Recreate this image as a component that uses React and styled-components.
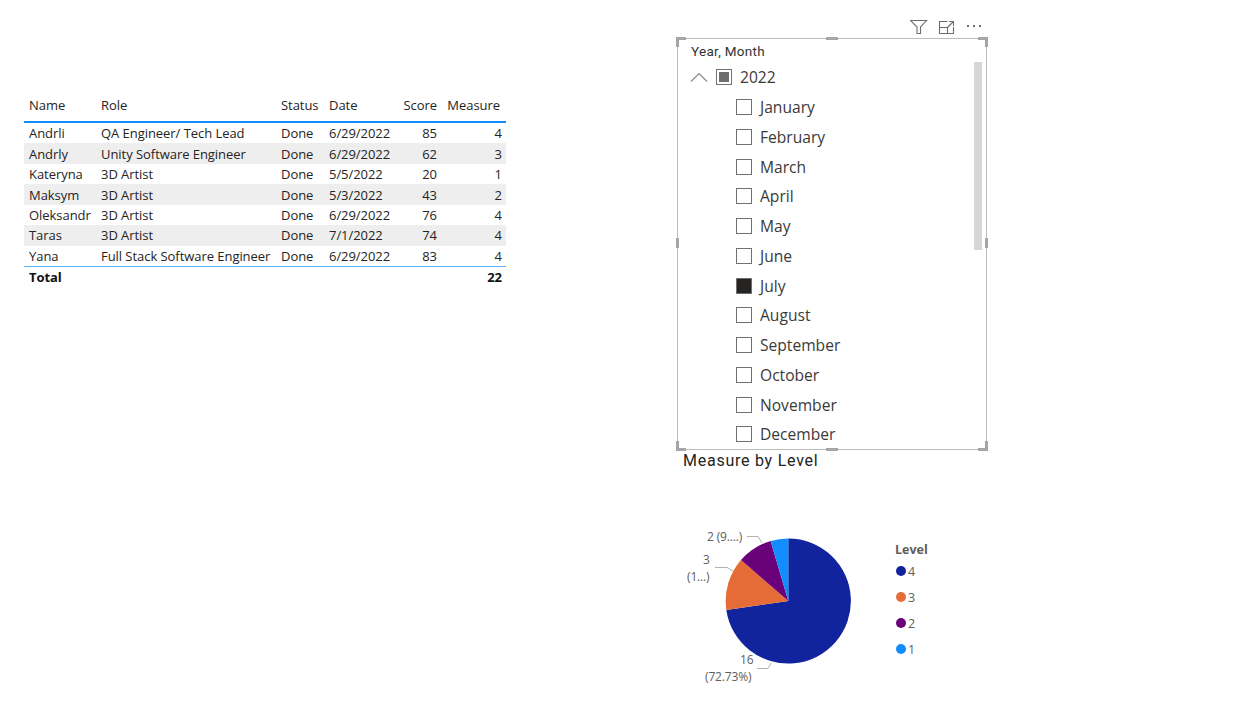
import styled, { createGlobalStyle } from "styled-components";

const GlobalStyle = createGlobalStyle`
  html, body {
    margin: 0;
    padding: 0;
    background: #fff;
  }
`;

const rows = [
  ["Andrli", "QA Engineer/ Tech Lead", "Done", "6/29/2022", 85, 4],
  ["Andrly", "Unity Software Engineer", "Done", "6/29/2022", 62, 3],
  ["Kateryna", "3D Artist", "Done", "5/5/2022", 20, 1],
  ["Maksym", "3D Artist", "Done", "5/3/2022", 43, 2],
  ["Oleksandr", "3D Artist", "Done", "6/29/2022", 76, 4],
  ["Taras", "3D Artist", "Done", "7/1/2022", 74, 4],
  ["Yana", "Full Stack Software Engineer", "Done", "6/29/2022", 83, 4],
];

const months = [
  "January",
  "February",
  "March",
  "April",
  "May",
  "June",
  "July",
  "August",
  "September",
  "October",
  "November",
  "December",
];

const levels = [
  { name: "4", value: 16, color: "#12239e" },
  { name: "3", value: 3, color: "#e66c37" },
  { name: "2", value: 2, color: "#6b007b" },
  { name: "1", value: 1, color: "#118dff" },
];

const Page = styled.div`
  width: 1244px;
  height: 717px;
  display: flex;
  align-items: flex-start;
  overflow: hidden;
  font-family: "Open Sans", "Noto Sans", sans-serif;
  color: #252423;
`;

const TableWrap = styled.div`
  width: 482px;
  margin: 95px 0 0 24px;
`;

const Grid = styled.div`
  display: grid;
  grid-template-columns: 72px 180px 48px 74px 43px 65px;
  align-items: center;
  font-size: 13px;
  letter-spacing: -0.05px;
`;

const HeadRow = styled(Grid)`
  height: 20px;
  padding-bottom: 6px;
  border-bottom: 2px solid #118dff;
`;

const BodyRow = styled(Grid)`
  height: 20.45px;
  background: ${(p) => (p.$alt ? "#eeeeee" : "#fff")};
`;

const TotalRow = styled(Grid)`
  height: 20px;
  border-top: 1px solid #5fb2fb;
  font-weight: 700;
  color: #111;
`;

const Cell = styled.div`
  padding: 0 ${(p) => (p.$right ? p.$pad || "4px" : "0")} 0 ${(p) => (p.$right ? "0" : "5px")};
  text-align: ${(p) => (p.$right ? "right" : "left")};
  white-space: nowrap;
`;

const RightColumn = styled.div`
  width: 310px;
  margin-left: 171px;
  display: flex;
  flex-direction: column;
`;

const Toolbar = styled.div`
  height: 38px;
  display: flex;
  align-items: flex-end;
  justify-content: flex-end;
  gap: 10px;
  padding: 0 3px 2px 0;
  box-sizing: border-box;
`;

const IconBox = styled.svg`
  display: block;
  width: 18px;
  height: 18px;
`;

const Slicer = styled.div`
  position: relative;
  height: 412px;
  box-sizing: border-box;
  border: 1px solid #bdbdbd;
  padding: 4px 0 0 12px;
`;

const SlicerClip = styled.div`
  height: 406px;
  overflow: hidden;
`;

const SlicerTitle = styled.div`
  font-family: Roboto, sans-serif;
  font-size: 13.5px;
  line-height: 16px;
  letter-spacing: 0.3px;
  color: #333;
  margin-bottom: 3.6px;
  padding-left: 1px;
`;

const Tree = styled.div`
  display: flex;
  flex-direction: column;
`;

const TreeRow = styled.div`
  height: 29.75px;
  display: flex;
  align-items: center;
  padding-left: ${(p) => (p.$child ? "46px" : "0")};
  font-size: 15.6px;
  color: #3b3a39;
`;

const Chevron = styled.svg`
  width: 18px;
  height: 10px;
  margin-right: 8px;
`;

const Check = styled.span`
  width: 16px;
  height: 16px;
  box-sizing: border-box;
  flex: none;
  margin-right: 8px;
  border: 1px solid #707070;
  background: ${(p) => (p.$on ? "#252423" : "#fff")};
  display: flex;
  align-items: center;
  justify-content: center;
`;

const CheckFill = styled.span`
  width: 10px;
  height: 10px;
  background: #6e6e6e;
`;

const Scrollbar = styled.div`
  position: absolute;
  top: 23px;
  right: 4px;
  width: 8px;
  height: 188px;
  background: #d6d6d6;
`;

const Handle = styled.span`
  position: absolute;
  background: #a6a6a6;
  ${(p) => p.$pos}
`;

const ChartTitle = styled.div`
  font-family: Roboto, sans-serif;
  font-size: 16px;
  line-height: 20px;
  letter-spacing: 0.75px;
  color: #252423;
  padding: 1px 0 0 6px;
`;

const ChartRow = styled.div`
  display: flex;
  align-items: flex-start;
`;

const PieSvg = styled.svg`
  display: block;
  width: 218px;
  height: 234px;
  flex: none;
`;

const PieLabel = styled.text`
  font-family: "Open Sans", sans-serif;
  font-size: 12px;
  letter-spacing: -0.15px;
  fill: #605e5c;
`;

const Legend = styled.div`
  margin-top: 71px;
  display: flex;
  flex-direction: column;
  font-size: 12.5px;
  color: #605e5c;
`;

const LegendTitle = styled.div`
  font-weight: 700;
  line-height: 16px;
`;

const LegendItem = styled.div`
  height: 26px;
  display: flex;
  align-items: center;
  gap: 2px;
  margin-left: 1px;
`;

const Dot = styled.span`
  width: 10px;
  height: 10px;
  border-radius: 50%;
  background: ${(p) => p.$color};
`;

// builds the wedges clockwise from twelve o'clock
function pieSlices(cx, cy, r) {
  const total = levels.reduce((sum, l) => sum + l.value, 0);
  let angle = 0;
  return levels.map((l) => {
    const start = angle;
    angle += (l.value / total) * Math.PI * 2;
    const x1 = cx + r * Math.sin(start);
    const y1 = cy - r * Math.cos(start);
    const x2 = cx + r * Math.sin(angle);
    const y2 = cy - r * Math.cos(angle);
    const large = angle - start > Math.PI ? 1 : 0;
    return {
      color: l.color,
      d: `M${cx} ${cy} L${x1} ${y1} A${r} ${r} 0 ${large} 1 ${x2} ${y2} Z`,
    };
  });
}

const FilterIcon = () => (
  <IconBox viewBox="0 0 18 18" fill="none" stroke="#6f6e6d" strokeWidth="1.1">
    <path d="M0.5 2.5 H16.5 L10.5 9 V15.5 H7 V9 Z" />
  </IconBox>
);

const FocusIcon = () => (
  <IconBox viewBox="0 0 18 18" fill="none" stroke="#6f6e6d" strokeWidth="1.1">
    <path d="M9.5 3.5 H1.5 V15.5 H15.5 V9" />
    <path d="M1.5 9.5 H9.5 V15.5" />
    <path d="M9.5 9.5 L15.5 3.5 M11 3.5 H15.5 V8" />
  </IconBox>
);

const MoreIcon = () => (
  <IconBox viewBox="0 0 18 18" fill="#6f6e6d">
    <rect x="1" y="7" width="2" height="2" />
    <rect x="7" y="7" width="2" height="2" />
    <rect x="13" y="7" width="2" height="2" />
  </IconBox>
);

const handles = [
  "top:-2px;left:-2px;width:10px;height:3px;",
  "top:-2px;left:-2px;width:3px;height:10px;",
  "top:-2px;right:-2px;width:10px;height:3px;",
  "top:-2px;right:-2px;width:3px;height:10px;",
  "bottom:-2px;left:-2px;width:10px;height:3px;",
  "bottom:-2px;left:-2px;width:3px;height:10px;",
  "bottom:-2px;right:-2px;width:10px;height:3px;",
  "bottom:-2px;right:-2px;width:3px;height:10px;",
  "top:-2px;left:148px;width:12px;height:3px;",
  "bottom:-2px;left:148px;width:12px;height:3px;",
  "top:199px;left:-2px;width:3px;height:10px;",
  "top:199px;right:-2px;width:3px;height:10px;",
];

export default function App() {
  return (
    <Page>
      <GlobalStyle />
      <TableWrap>
        <HeadRow>
          <Cell>Name</Cell>
          <Cell>Role</Cell>
          <Cell>Status</Cell>
          <Cell>Date</Cell>
          <Cell $right>Score</Cell>
          <Cell $right $pad="6px">Measure</Cell>
        </HeadRow>
        {rows.map((row, index) => (
          <BodyRow key={row[0]} $alt={index % 2 === 1}>
            <Cell>{row[0]}</Cell>
            <Cell>{row[1]}</Cell>
            <Cell>{row[2]}</Cell>
            <Cell>{row[3]}</Cell>
            <Cell $right>{row[4]}</Cell>
            <Cell $right>{row[5]}</Cell>
          </BodyRow>
        ))}
        <TotalRow>
          <Cell>Total</Cell>
          <Cell />
          <Cell />
          <Cell />
          <Cell />
          <Cell $right>22</Cell>
        </TotalRow>
      </TableWrap>

      <RightColumn>
        <Toolbar>
          <FilterIcon />
          <FocusIcon />
          <MoreIcon />
        </Toolbar>
        <Slicer>
          <SlicerClip>
            <SlicerTitle>Year, Month</SlicerTitle>
            <Tree>
              <TreeRow>
                <Chevron viewBox="0 0 18 10" fill="none" stroke="#8a8886" strokeWidth="1.1">
                  <path d="M1 9.5 L9 1.5 L17 9.5" />
                </Chevron>
                <Check>
                  <CheckFill />
                </Check>
                2022
              </TreeRow>
              {months.map((month) => (
                <TreeRow $child key={month}>
                  <Check $on={month === "July"} />
                  {month}
                </TreeRow>
              ))}
            </Tree>
          </SlicerClip>
          <Scrollbar />
          {handles.map((pos) => (
            <Handle key={pos} $pos={pos} />
          ))}
        </Slicer>
        <ChartTitle>Measure by Level</ChartTitle>
        <ChartRow>
          <PieSvg viewBox="0 0 218 234">
            {pieSlices(111.3, 130, 62.6).map((slice) => (
              <path key={slice.color} d={slice.d} fill={slice.color} />
            ))}
            <g fill="none" stroke="#b3b0ad" strokeWidth="1">
              <path d="M70 65.5 H81 L85 72" />
              <path d="M38 96.5 H50 L56 100" />
              <path d="M80 197.5 H91 L94 192" />
            </g>
            <PieLabel x="30" y="70">2 (9....)</PieLabel>
            <PieLabel x="26" y="93">3</PieLabel>
            <PieLabel x="10" y="110">(1...)</PieLabel>
            <PieLabel x="63" y="193">16</PieLabel>
            <PieLabel x="28" y="210">(72.73%)</PieLabel>
          </PieSvg>
          <Legend>
            <LegendTitle>Level</LegendTitle>
            {levels.map((level) => (
              <LegendItem key={level.name}>
                <Dot $color={level.color} />
                {level.name}
              </LegendItem>
            ))}
          </Legend>
        </ChartRow>
      </RightColumn>
    </Page>
  );
}
